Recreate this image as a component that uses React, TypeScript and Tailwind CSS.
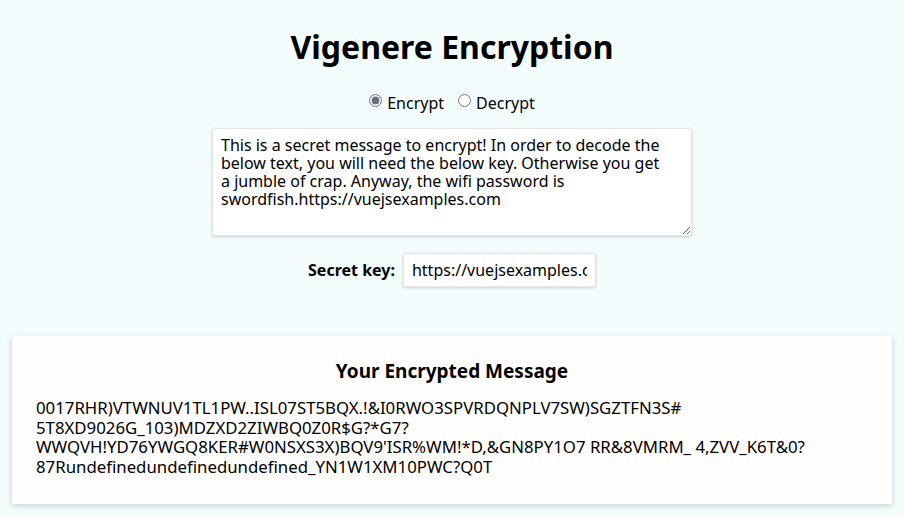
import { useState } from "react";

const cipher = [
  "0017RHR)VTWNUV1TL1PW..ISL07ST5BQX.!&I0RWO3SPVRDQNPLV7SW)SGZTFN3S#",
  "5T8XD9026G_103)MDZXD2ZIWBQ0Z0R$G?*G7?",
  "WWQVH!YD76YWGQ8KER#W0NSXS3X)BQV9'ISR%WM!*D,&GN8PY1O7 RR&8VMRM_ 4,ZVV_K6T&0?",
  "87Rundefinedundefinedundefined_YN1W1XM10PWC?Q0T",
];

export default function App() {
  const [mode, setMode] = useState("encrypt");

  const [message, setMessage] = useState(
    "This is a secret message to encrypt! In order to decode the below text, you will need the below key. Otherwise you get a jumble of crap. Anyway, the wifi password is swordfish.https://vuejsexamples.com"
  );

  const [secret, setSecret] = useState("https://vuejsexamples.com");

  return (
    <main className="min-h-screen bg-[#f4fdfd] pt-[26px] text-black [font-family:'Noto_Sans',sans-serif]">
      {/* HEADER */}

      <h1 className="text-center text-[32px] font-bold leading-[42px]">
        Vigenere Encryption
      </h1>

      {/* MODE */}

      <div className="mt-[25px] flex items-center justify-center gap-[14px] text-[16px] leading-[20px]">
        <label className="flex items-center gap-[5px]">
          <input
            type="radio"
            checked={mode === "encrypt"}
            onChange={() => setMode("encrypt")}
            className="mb-[6px] h-[13px] w-[13px] accent-gray-500"
          />
          Encrypt
        </label>

        <label className="flex items-center gap-[5px]">
          <input
            type="radio"
            checked={mode === "decrypt"}
            onChange={() => setMode("decrypt")}
            className="mb-[6px] h-[13px] w-[13px] accent-gray-500"
          />
          Decrypt
        </label>
      </div>

      {/* MESSAGE */}

      <div className="mt-[15px] flex justify-center">
        <textarea
          value={message}
          onChange={(e) => setMessage(e.target.value)}
          spellCheck
          className="h-[108px] w-[480px] resize rounded-[2px] border border-[#e6e6e6] bg-white py-[7px] pl-[8px] pr-[20px] text-[16px] leading-[18px] shadow-[0_1px_3px_rgba(0,0,0,0.18)] outline-none"
        />
      </div>

      {/* KEY */}

      <div className="mt-[17px] flex items-center justify-center gap-[8px]">
        <span className="text-[16px] font-bold">Secret key:</span>

        <input
          type="text"
          value={secret}
          onChange={(e) => setSecret(e.target.value)}
          className="h-[34px] w-[193px] rounded-[2px] border border-[#e6e6e6] bg-white px-[8px] text-[16px] shadow-[0_1px_3px_rgba(0,0,0,0.18)] outline-none"
        />
      </div>

      {/* RESULT */}

      <div className="mx-[12px] mt-[49px] bg-[#fffefd] px-[24px] pb-[27px] pt-[22px] shadow-[0_2px_6px_rgba(0,0,0,0.18)]">
        <h2 className="text-center text-[19px] font-bold leading-[26px]">
          Your Encrypted Message
        </h2>

        <p className="mt-[14px] text-[16.8px] leading-[19.7px]">
          {cipher[0]}
          <br />
          {cipher[1]}
          <br />
          {cipher[2]}
          <br />
          {cipher[3]}
        </p>
      </div>
    </main>
  );
}
